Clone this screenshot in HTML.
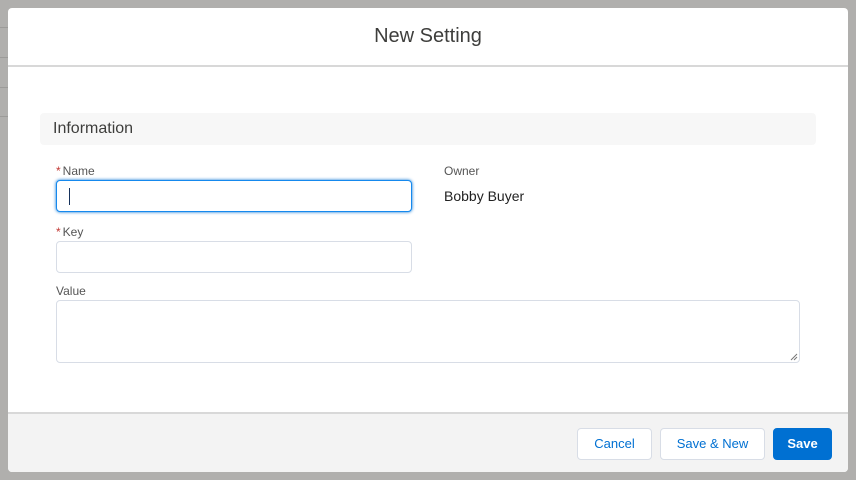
<!DOCTYPE html>
<html><head><style>
body{margin:0;width:856px;height:480px;background:#b0afad;font-family:"Liberation Sans",sans-serif;position:relative;overflow:hidden}
.bgl{position:absolute;left:0;width:8px;height:1px;background:#9c9b99}
.modal{position:absolute;left:8px;top:8px;width:840px;height:464px;background:#fff;border-radius:4px;overflow:hidden}
.hdr{height:57px;border-bottom:2px solid #d8d8d8;text-align:center;font-size:20px;line-height:56px;color:#3e3e3c}
.sec{position:absolute;left:32px;top:105px;width:776px;height:32px;background:#f7f7f7;border-radius:4px;font-size:16px;line-height:32px;color:#3e3e3c;text-indent:13px}
.lbl{position:absolute;font-size:12px;color:#555}
.lbl b{color:#c23934;font-weight:normal;margin-right:2px}
.inp{position:absolute;border:1px solid #d8dde6;border-radius:4px;background:#fff;box-sizing:border-box}
.ftr{position:absolute;left:0;top:404px;width:840px;height:60px;border-top:2px solid #d8d8d8;background:#f3f3f3}
.btn{position:absolute;top:14px;height:32px;box-sizing:border-box;border:1px solid #d8dde6;border-radius:4px;background:#fff;color:#0070d2;font-size:13px;line-height:30px;text-align:center}
</style></head><body>
<div class="bgl" style="top:27px"></div><div class="bgl" style="top:57px"></div><div class="bgl" style="top:87px"></div><div class="bgl" style="top:116px"></div>
<div class="modal">
<div class="hdr">New Setting</div>
<div class="sec">Information</div>
<div class="lbl" style="left:48px;top:156px"><b>*</b>Name</div>
<div class="inp" style="left:48px;top:172px;width:356px;height:32px;border:1px solid #1589ee;box-shadow:0 0 3px #0070d2"><div style="position:absolute;left:12px;top:7px;width:1px;height:17px;background:#16325c"></div></div>
<div class="lbl" style="left:436px;top:156px">Owner</div>
<div style="position:absolute;left:436px;top:180px;font-size:14px;color:#222">Bobby Buyer</div>
<div class="lbl" style="left:48px;top:217px"><b>*</b>Key</div>
<div class="inp" style="left:48px;top:233px;width:356px;height:32px"></div>
<div class="lbl" style="left:48px;top:276px">Value</div>
<div class="inp" style="left:48px;top:292px;width:744px;height:63px"><svg style="position:absolute;right:1px;bottom:1px" width="8" height="8"><path d="M1 7L7 1M4 7L7 4" stroke="#777" stroke-width="1"/></svg></div>
<div class="ftr">
<div class="btn" style="left:569px;width:75px">Cancel</div>
<div class="btn" style="left:652px;width:105px">Save &amp; New</div>
<div class="btn" style="left:765px;width:59px;background:#0070d2;border-color:#0070d2;color:#fff;font-weight:bold">Save</div>
</div>
</div>
</body></html>
